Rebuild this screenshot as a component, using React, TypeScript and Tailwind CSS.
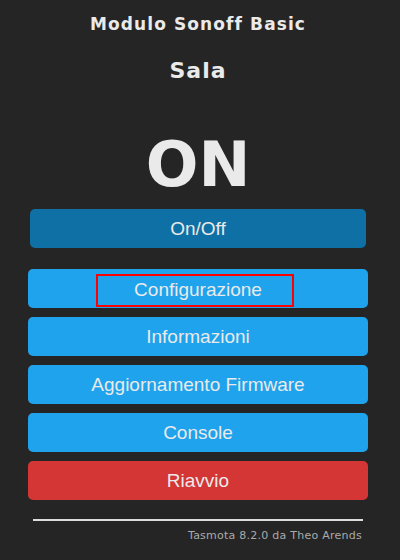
export default function App() {
  const buttons = ['Informazioni', 'Aggiornamento Firmware', 'Console']

  return (
    <div className="min-h-[560px] w-full bg-[#252525] text-[#eaeaea] font-['Liberation_Sans',sans-serif]">
      <div className="ml-[28px] w-[340px] pt-[12px]">
        <div className="text-center font-['DejaVu_Sans',sans-serif] font-bold">
          <h3 className="text-[17px] leading-[24px] tracking-[1.1px]">Modulo Sonoff Basic</h3>
          <h2 className="mt-[20px] text-[22px] leading-[30px] tracking-[1px]">Sala</h2>
        </div>

        <div className="mt-[47px] text-center font-['DejaVu_Sans',sans-serif] text-[62px] font-bold leading-[64px]">
          ON
        </div>

        <div className="mt-[12px] px-[2px]">
          <button className="h-[39px] w-full rounded-[5px] bg-[#0e70a4] text-[19px] leading-none">
            On/Off
          </button>
        </div>

        <div className="mt-[21px] flex flex-col gap-[9px]">
          <button className="flex h-[39px] w-full items-center justify-center rounded-[5px] bg-[#1fa3ec] text-[19px] leading-none">
            <span className="mr-[6px] mt-[3px] flex h-[33px] w-[198px] items-center justify-center border-2 border-[#ff0000] pb-[2px] pl-[6px]">
              Configurazione
            </span>
          </button>
          {buttons.map((b) => (
            <button
              key={b}
              className="h-[39px] w-full rounded-[5px] bg-[#1fa3ec] text-[19px] leading-none"
            >
              {b}
            </button>
          ))}
          <button className="h-[39px] w-full rounded-[5px] bg-[#d43535] text-[19px] leading-none">
            Riavvio
          </button>
        </div>

        <div className="mx-[5px] mt-[19px] h-[2px] bg-[#dddddd]" />
        <div className="mr-[6px] mt-[7px] text-right font-['DejaVu_Sans',sans-serif] text-[11px] tracking-[0.25px] text-[#aaaaaa]">
          Tasmota 8.2.0 da Theo Arends
        </div>
      </div>
    </div>
  )
}
